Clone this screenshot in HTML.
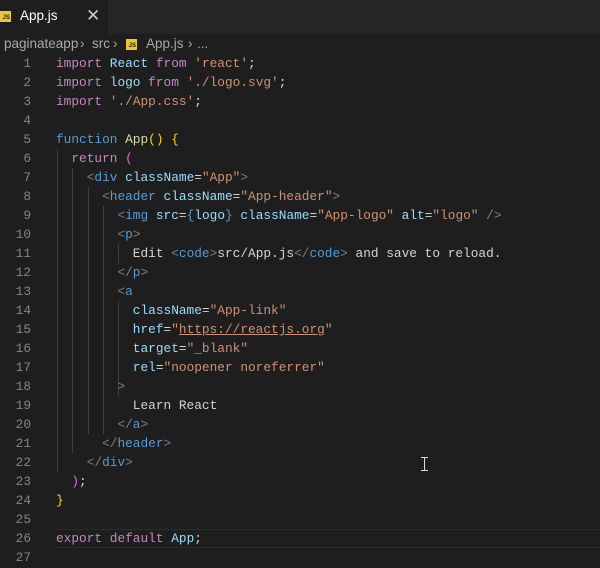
<!DOCTYPE html>
<html><head><meta charset="utf-8"><style>
body{margin:0;width:600px;height:568px;background:#1e1e1e;overflow:hidden;position:relative;font-family:"Liberation Sans",sans-serif}
.tabbar{position:absolute;left:0;top:0;width:600px;height:34px;background:#252526}
.tab{position:absolute;left:0;top:0;width:108px;height:34px;background:#1e1e1e}
.js{position:absolute;width:11px;height:11px;background:#e8c53a;color:#222;font:bold 6px "Liberation Sans",sans-serif;line-height:14px;text-align:right;box-sizing:border-box;padding-right:1px}
.tt{position:absolute;left:20px;top:8px;color:#fff;font-size:13.5px}
.x{position:absolute;left:86px;top:6px;color:#ccc;font-size:17px}
.bc{position:absolute;top:36px;color:#a9a9a9;font-size:13.5px;white-space:pre}
.ln{position:absolute;left:0;width:31px;text-align:right;color:#858585;font:12.8px "Liberation Mono",monospace;line-height:19px}
.cd{position:absolute;left:56px;color:#d4d4d4;font:12.8px "Liberation Mono",monospace;line-height:19px;white-space:pre}
.g{position:absolute;width:1px;background:#404040}
.k{color:#c586c0}.v{color:#9cdcfe}.s{color:#ce9178}.t{color:#569cd6}.b{color:#808080}.f{color:#dcdcaa}.y{color:#ffd700}.p{color:#da70d6}
.cur{position:absolute;left:56px;top:529px;width:544px;height:17px;border-top:1px solid #2c2c2c;border-bottom:1px solid #2c2c2c}
</style></head><body>
<div class="tabbar"><div class="tab"><div class="js" style="left:0;top:11px">JS</div><div class="tt">App.js</div><div class="x">✕</div></div></div>
<div class="bc" style="left:4px">paginateapp</div>
<div class="bc" style="left:80px">›</div>
<div class="bc" style="left:92px">src</div>
<div class="bc" style="left:113px">›</div>
<div class="js" style="left:126px;top:39px">JS</div>
<div class="bc" style="left:146px">App.js</div>
<div class="bc" style="left:188px">›</div>
<div class="bc" style="left:197px">...</div>
<div class="cur"></div>
<div class="g" style="left:57px;top:149px;height:323px"></div>
<div class="g" style="left:72px;top:168px;height:285px"></div>
<div class="g" style="left:88px;top:187px;height:247px"></div>
<div class="g" style="left:103px;top:206px;height:228px"></div>
<div class="g" style="left:118px;top:244px;height:19px"></div>
<div class="g" style="left:118px;top:301px;height:95px"></div>
<div class="ln" style="top:54px">1<br>2<br>3<br>4<br>5<br>6<br>7<br>8<br>9<br>10<br>11<br>12<br>13<br>14<br>15<br>16<br>17<br>18<br>19<br>20<br>21<br>22<br>23<br>24<br>25<br>26<br>27</div>
<div class="cd" style="top:54px"><span class="k">import</span> <span class="v">React</span> <span class="k">from</span> <span class="s">'react'</span>;
<span class="k">import</span> <span class="v">logo</span> <span class="k">from</span> <span class="s">'./logo.svg'</span>;
<span class="k">import</span> <span class="s">'./App.css'</span>;

<span class="t">function</span> <span class="f">App</span><span class="y">()</span> <span class="y">{</span>
  <span class="k">return</span> <span class="p">(</span>
    <span class="b">&lt;</span><span class="t">div</span> <span class="v">className</span>=<span class="s">"App"</span><span class="b">&gt;</span>
      <span class="b">&lt;</span><span class="t">header</span> <span class="v">className</span>=<span class="s">"App-header"</span><span class="b">&gt;</span>
        <span class="b">&lt;</span><span class="t">img</span> <span class="v">src</span>=<span class="t">{</span><span class="v">logo</span><span class="t">}</span> <span class="v">className</span>=<span class="s">"App-logo"</span> <span class="v">alt</span>=<span class="s">"logo"</span> <span class="b">/&gt;</span>
        <span class="b">&lt;</span><span class="t">p</span><span class="b">&gt;</span>
          Edit <span class="b">&lt;</span><span class="t">code</span><span class="b">&gt;</span>src/App.js<span class="b">&lt;/</span><span class="t">code</span><span class="b">&gt;</span> and save to reload.
        <span class="b">&lt;/</span><span class="t">p</span><span class="b">&gt;</span>
        <span class="b">&lt;</span><span class="t">a</span>
          <span class="v">className</span>=<span class="s">"App-link"</span>
          <span class="v">href</span>=<span class="s">"<u>https://reactjs.org</u>"</span>
          <span class="v">target</span>=<span class="s">"_blank"</span>
          <span class="v">rel</span>=<span class="s">"noopener noreferrer"</span>
        <span class="b">&gt;</span>
          Learn React
        <span class="b">&lt;/</span><span class="t">a</span><span class="b">&gt;</span>
      <span class="b">&lt;/</span><span class="t">header</span><span class="b">&gt;</span>
    <span class="b">&lt;/</span><span class="t">div</span><span class="b">&gt;</span>
  <span class="p">)</span>;
<span class="y">}</span>

<span class="k">export</span> <span class="k">default</span> <span class="v">App</span>;
</div>
<div style="position:absolute;left:424px;top:457px;width:1px;height:14px;background:#ddd"></div>
<div style="position:absolute;left:421px;top:457px;width:7px;height:1px;background:#ddd"></div>
<div style="position:absolute;left:421px;top:470px;width:7px;height:1px;background:#ddd"></div>
</body></html>
